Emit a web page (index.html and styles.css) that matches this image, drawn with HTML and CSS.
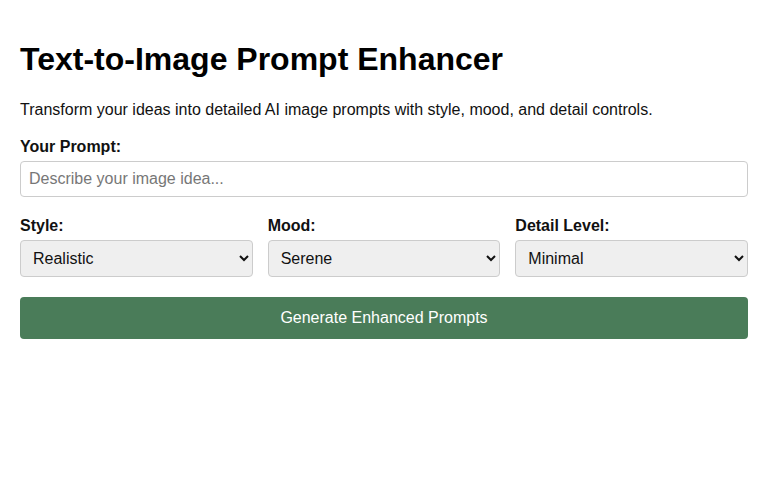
FILE: index.html
```html
<!DOCTYPE html>
<html lang="en">
<head>
<meta charset="utf-8">
<title>Text-to-Image Prompt Enhancer</title>
<link rel="stylesheet" href="styles.css">
</head>
<body>
<main class="app">
  <h1 class="title">Text-to-Image Prompt Enhancer</h1>
  <p class="intro">Transform your ideas into detailed AI image prompts with style, mood, and detail controls.</p>
  <div class="field prompt-field">
    <label class="label" for="prompt">Your Prompt:</label>
    <input class="input" id="prompt" type="text" placeholder="Describe your image idea...">
  </div>
  <div class="controls">
    <div class="field">
      <label class="label" for="style">Style:</label>
      <select class="select" id="style">
        <option>Realistic</option>
        <option>Anime</option>
        <option>Oil Painting</option>
      </select>
    </div>
    <div class="field">
      <label class="label" for="mood">Mood:</label>
      <select class="select" id="mood">
        <option>Serene</option>
        <option>Dramatic</option>
        <option>Mysterious</option>
      </select>
    </div>
    <div class="field">
      <label class="label" for="detail">Detail Level:</label>
      <select class="select" id="detail">
        <option>Minimal</option>
        <option>Moderate</option>
        <option>Extreme</option>
      </select>
    </div>
  </div>
  <button class="generate" type="button">Generate Enhanced Prompts</button>
</main>
</body>
</html>
```

FILE: styles.css
```css
html, body {
  margin: 0;
  padding: 0;
  background: #fff;
}
body {
  font-family: "Liberation Sans", Arial, sans-serif;
  color: #111;
}
.app {
  padding: 20px;
}
.title {
  font-size: 32px;
  font-weight: bold;
  margin: 21px 0 23px;
  color: #000;
}
.intro {
  font-size: 16px;
  margin: 0 0 19px;
}
.field {
  display: flex;
  flex-direction: column;
}
.prompt-field {
  margin-bottom: 20px;
}
.label {
  font-weight: bold;
  font-size: 16px;
  margin-bottom: 5px;
}
.input {
  font-family: inherit;
  font-size: 16px;
  height: 36px;
  box-sizing: border-box;
  padding: 8px;
  border: 1px solid #ccc;
  border-radius: 4px;
  color: #111;
}
.input::placeholder {
  color: #777;
}
.controls {
  display: grid;
  grid-template-columns: repeat(3, 1fr);
  gap: 15px;
  margin-bottom: 20px;
}
.select {
  font-family: inherit;
  font-size: 16px;
  height: 37px;
  box-sizing: border-box;
  padding: 0 8px;
  border: 1px solid #ccc;
  border-radius: 4px;
  background: #efefef;
  color: #111;
}
.generate {
  display: block;
  width: 100%;
  height: 42px;
  border: none;
  border-radius: 4px;
  background: #4a7c59;
  color: #fff;
  font-family: inherit;
  font-size: 16px;
}
```
